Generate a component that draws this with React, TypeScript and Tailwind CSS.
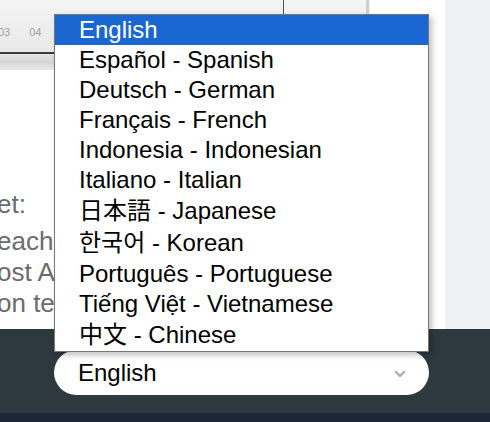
import { ChevronDown } from 'lucide-react';

const languages = [
  { label: 'English', cjk: false },
  { label: 'Español - Spanish', cjk: false },
  { label: 'Deutsch - German', cjk: false },
  { label: 'Français - French', cjk: false },
  { label: 'Indonesia - Indonesian', cjk: false },
  { label: 'Italiano - Italian', cjk: false },
  { label: '日本語 - Japanese', cjk: true },
  { label: '한국어 - Korean', cjk: true },
  { label: 'Português - Portuguese', cjk: false },
  { label: 'Tiếng Việt - Vietnamese', cjk: false },
  { label: '中文 - Chinese', cjk: true },
];

const font = {
  fontFamily: '"Liberation Sans", Arial, "Noto Sans CJK JP", "Noto Sans CJK KR", sans-serif',
};

export default function App() {
  return (
    <div className="relative w-[490px] h-[422px] overflow-hidden flex flex-col" style={font}>
      {/* Page body */}
      <div className="flex h-[329px] shrink-0">
        <div className="w-[445px] bg-white flex flex-col overflow-hidden">
          {/* Timeline picture at the top */}
          <div className="shrink-0 w-[370px] h-[52px] bg-gradient-to-b from-[#f4f4f4] to-[#e9e9e9] flex items-end pb-[12px] relative">
            <div className="flex gap-[19px] -ml-[2px] text-[11px] text-[#a0a0a0]">
              <span>03</span>
              <span>04</span>
            </div>
            <div className="absolute left-[283px] top-0 h-full w-px bg-[#555]" />
            <div className="absolute left-[366px] top-0 h-full w-[3px] bg-[#cfcfcf]" />
          </div>
          <div className="shrink-0 w-[370px] h-[2px] bg-[#3a3a3a]" />
          <div className="shrink-0 w-[370px] h-[16px] bg-gradient-to-b from-[#e6e6e6] via-[#d4d4d4] to-[#ececec]" />

          {/* Article text, mostly hidden behind the menu */}
          <div className="shrink-0 mt-[119px] -ml-[3px] text-[26px] leading-[31px] text-[#6b6b6b]">
            <p className="mb-[6px]">et:</p>
            <p>each</p>
            <p>ost A</p>
            <p>on te</p>
          </div>
        </div>
        <div className="flex-1 bg-[#eff0f4]" />
      </div>

      {/* Footer */}
      <div className="shrink-0 h-[84px] bg-[#2e393f] pt-[21px] pl-[54px]">
        <div className="w-[375px] h-[45px] bg-white rounded-full flex items-center justify-between pl-[24px] pr-[21px]">
          <span className="text-[24px] text-black">English</span>
          <ChevronDown className="w-[16px] h-[16px] text-[#aaaaaa] mt-[2px]" strokeWidth={3.5} />
        </div>
      </div>
      <div className="shrink-0 h-[9px] bg-[#1b2636]" />

      {/* Open language menu */}
      <div className="absolute left-[54px] top-[14px] w-[375px] bg-white border border-[#777] shadow-[3px_3px_6px_rgba(0,0,0,0.25)]">
        {languages.map((lang, i) => (
          <div
            key={lang.label}
            className={`pl-[24px] text-[24px] whitespace-nowrap ${
              lang.cjk ? 'h-[32px] leading-[31px]' : 'h-[30px] leading-[29px]'
            } ${i === 0 ? 'bg-[#1a67d2] text-white' : 'text-black'}`}
          >
            {lang.label}
          </div>
        ))}
      </div>
    </div>
  );
}
